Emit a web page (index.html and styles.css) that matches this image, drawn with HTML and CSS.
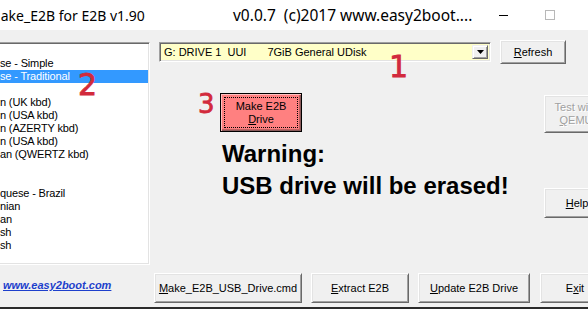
FILE: index.html
```html
<!DOCTYPE html>
<html>
<head>
<meta charset="utf-8">
<title>Make_E2B</title>
<link rel="stylesheet" href="styles.css">
</head>
<body>
<div class="window">
  <div class="titlebar">
    <span class="title">Make_E2B for E2B v1.90</span>
    <span class="subtitle">v0.0.7&nbsp; (c)2017 www.easy2boot....</span>
    <span class="tb-min"></span>
    <span class="tb-max"></span>
  </div>
  <div class="client">
    <div class="leftcol">
      <div class="listbox">
        <div class="item"></div>
        <div class="item">se - Simple</div>
        <div class="item sel">se - Traditional</div>
        <div class="item"></div>
        <div class="item">n (UK kbd)</div>
        <div class="item">n (USA kbd)</div>
        <div class="item">n (AZERTY kbd)</div>
        <div class="item">n (USA kbd)</div>
        <div class="item">an (QWERTZ kbd)</div>
        <div class="item"></div>
        <div class="item"></div>
        <div class="item">quese - Brazil</div>
        <div class="item">nian</div>
        <div class="item">an</div>
        <div class="item">sh</div>
        <div class="item">sh</div>
      </div>
      <a class="link" href="#">www.easy2boot.com</a>
    </div>
    <div class="rightcol">
      <div class="toprow">
        <div class="combo">
          <div class="combo-text"><span>G: DRIVE 1</span><span class="c2">UUI</span><span class="c3">7GiB General UDisk</span></div>
          <div class="combo-btn"><svg width="7" height="4" viewBox="0 0 7 4"><path d="M0 0H7L3.5 4Z" fill="#000"/></svg></div>
        </div>
        <button class="btn refresh"><u>R</u>efresh</button>
      </div>
      <div class="middle">
        <div class="main">
          <button class="btn makebtn">Make E2B<br><u>D</u>rive</button>
          <div class="warning">Warning:<br>USB drive will be erased!</div>
        </div>
        <div class="side">
          <button class="btn test" disabled>Test with<br><u>Q</u>EMU</button>
          <button class="btn help"><u>H</u>elp</button>
        </div>
      </div>
      <div class="bottomrow">
        <button class="btn b1"><u>M</u>ake_E2B_USB_Drive.cmd</button>
        <button class="btn b2"><u>E</u>xtract E2B</button>
        <button class="btn b3"><u>U</u>pdate E2B Drive</button>
        <button class="btn b4">E<u>x</u>it</button>
      </div>
    </div>
  </div>
  <span class="num n1">1</span>
  <span class="num n2">2</span>
  <span class="num n3">3</span>
</div>
</body>
</html>
```
FILE: styles.css
```css
html, body {
  margin: 0;
  padding: 0;
}
body {
  width: 588px;
  height: 309px;
  overflow: hidden;
  background: #f0f0f0;
  font-family: "Liberation Sans", Arial, sans-serif;
  font-size: 11px;
  color: #000;
}
.window {
  position: relative;
  display: flex;
  flex-direction: column;
  width: 588px;
  height: 307px;
  border-bottom: 2px solid #2a2a2a;
  overflow: hidden;
}
.titlebar {
  height: 30px;
  flex-shrink: 0;
  background: #fff;
  display: grid;
  grid-template-columns: 245px 266px 46px 10px;
  align-items: center;
  margin-left: -12px;
  font-family: "Noto Sans", "Open Sans", sans-serif;
  font-size: 14px;
  color: #000;
  white-space: nowrap;
}
.subtitle {
  font-size: 15.5px;
}
.tb-min {
  width: 9px;
  height: 1px;
  background: #000;
}
.tb-max {
  width: 8px;
  height: 8px;
  border: 1px solid #b8b8b8;
}
.client {
  flex: 1;
  display: flex;
  min-height: 0;
}
.leftcol {
  width: 150px;
  flex-shrink: 0;
  display: flex;
  flex-direction: column;
}
.listbox {
  margin-top: 12px;
  height: 223px;
  box-sizing: border-box;
  background: #fff;
  border-top: 1px solid #a0a0a0;
  border-right: 1px solid #fff;
  border-bottom: 1px solid #fff;
  box-shadow: inset 0 1px #696969, inset -1px -1px #e3e3e3;
  padding-top: 1px;
  overflow: hidden;
}
.item {
  height: 13px;
  line-height: 13px;
  white-space: nowrap;
  margin-right: 1px;
  letter-spacing: -0.15px;
}
.item.sel {
  background: #3399ff;
  color: #fff;
}
.link {
  margin: 14px 0 0 3px;
  line-height: 13px;
  font-weight: bold;
  font-style: italic;
  color: #1d3fcc;
  text-decoration: underline;
  white-space: nowrap;
}
.rightcol {
  flex: 1;
  display: flex;
  flex-direction: column;
  min-width: 0;
}
.toprow {
  display: flex;
  align-items: flex-start;
  padding-top: 10px;
  height: 24px;
}
.combo {
  margin: 2px 0 0 9px;
  width: 332px;
  height: 20px;
  box-sizing: border-box;
  display: flex;
  background: #ffffc8;
  border: 1px solid;
  border-color: #a0a0a0 #fff #fff #a0a0a0;
  box-shadow: inset 1px 1px #696969, inset -1px -1px #e3e3e3;
  padding: 2px;
}
.combo-text {
  flex: 1;
  line-height: 14px;
  padding-left: 2px;
  white-space: nowrap;
  display: flex;
}
.combo-text .c2 {
  margin-left: 6px;
}
.combo-text .c3 {
  margin-left: 21px;
}
.combo-btn {
  width: 16px;
  height: 14px;
  box-sizing: border-box;
  background: #f0f0f0;
  border: 1px solid;
  border-color: #f0f0f0 #696969 #696969 #f0f0f0;
  box-shadow: inset 1px 1px #fff, inset -1px -1px #a0a0a0;
  display: flex;
  align-items: center;
  justify-content: center;
}
.btn {
  box-sizing: border-box;
  background: #f0f0f0;
  border: 1px solid;
  border-color: #fff #696969 #696969 #fff;
  box-shadow: inset 1px 1px #e3e3e3, inset -1px -1px #a0a0a0;
  font-family: "Liberation Sans", Arial, sans-serif;
  font-size: 11px;
  line-height: 13px;
  color: #000;
  padding: 0;
  margin: 0;
  flex-shrink: 0;
  text-align: center;
  white-space: nowrap;
}
.refresh {
  margin-left: 9px;
  width: 66px;
  height: 24px;
}
.middle {
  flex: 1;
  display: flex;
  min-height: 0;
}
.main {
  width: 394px;
  flex-shrink: 0;
  display: flex;
  flex-direction: column;
  align-items: flex-start;
}
.makebtn {
  position: relative;
  margin: 29px 0 0 70px;
  width: 82px;
  height: 39px;
  background: #ff8080;
  border: 1px solid #000;
  box-shadow: inset 1px 1px #ffc0c0, inset -1px -1px #8a5a5a, inset -2px -2px #c06060;
}
.makebtn::after {
  content: "";
  position: absolute;
  left: 3px;
  top: 3px;
  right: 3px;
  bottom: 3px;
  border: 1px dotted #000;
}
.warning {
  margin: 6px 0 0 72px;
  font-size: 24px;
  font-weight: bold;
  line-height: 32px;
  white-space: nowrap;
}
.side {
  display: flex;
  flex-direction: column;
  flex-shrink: 0;
}
.test {
  margin-top: 31px;
  width: 64px;
  height: 38px;
  color: #a0a0a0;
  text-shadow: 1px 1px #fff;
}
.help {
  margin-top: 55px;
  width: 66px;
  height: 30px;
}
.bottomrow {
  display: flex;
  padding: 0 0 4px 4px;
  height: 30px;
}
.bottomrow .btn {
  height: 30px;
  margin-right: 9px;
}
.b1 { width: 148px; }
.b2 { width: 98px; }
.b3 { width: 112px; margin-right: 10px !important; }
.b4 { width: 70px; }
.num {
  position: absolute;
  font-family: "DejaVu Sans", sans-serif;
  color: #d22a3c;
  line-height: 1;
  -webkit-text-stroke: 0.8px #d22a3c;
}
.n1 {
  left: 389px;
  top: 52px;
  font-size: 30px;
}
.n2 {
  left: 78px;
  top: 70px;
  font-size: 30px;
}
.n3 {
  left: 198px;
  top: 91px;
  font-size: 26px;
}
```
